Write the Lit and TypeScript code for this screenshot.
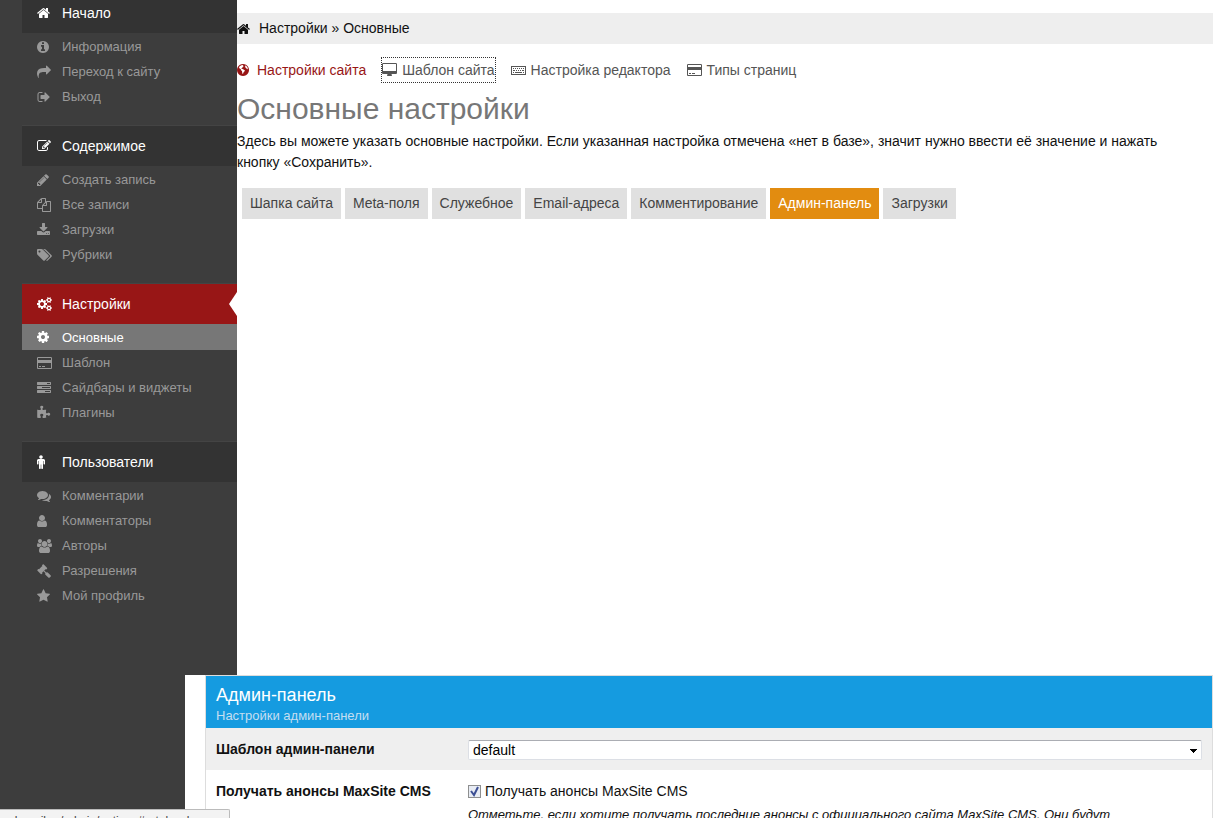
import { LitElement, html, css, svg } from "lit";
import { customElement, state } from "lit/decorators.js";

/* glyph: [left edge, advance width, path]; every glyph is 1792 units tall */
const GLYPHS: Record<string, [number, number, string]> = {
  home: [64, 1664, "M1472 992v480q0 26-19 45t-45 19h-384v-384h-256v384h-384q-26 0-45-19t-19-45v-480q0-1 .5-3t.5-3l575-474 575 474q1 2 1 6zm223-69l-62 74q-8 9-21 11h-3q-13 0-21-7l-692-577-692 577q-12 8-24 7-13-2-21-11l-62-74q-8-10-7-23.5t11-21.5l719-599q32-26 76-26t76 26l244 204v-195q0-14 9-23t23-9h192q14 0 23 9t9 23v408l219 182q10 8 11 21.5t-7 23.5z"],
  info: [128, 1536, "M1152 1376v-160q0-14-9-23t-23-9h-96v-512q0-14-9-23t-23-9h-320q-14 0-23 9t-9 23v160q0 14 9 23t23 9h96v320h-96q-14 0-23 9t-9 23v160q0 14 9 23t23 9h448q14 0 23-9t9-23zm-128-896v-160q0-14-9-23t-23-9h-192q-14 0-23 9t-9 23v160q0 14 9 23t23 9h192q14 0 23-9t9-23zm640 416q0 209-103 385.5t-279.5 279.5-385.5 103-385.5-103-279.5-279.5-103-385.5 103-385.5 279.5-279.5 385.5-103 385.5 103 279.5 279.5 103 385.5z"],
  share: [0, 1792, "M1792 640q0 26-19 45l-512 512q-19 19-45 19t-45-19-19-45v-256h-224q-98 0-175.5 6t-154 21.5-133 42.5-105.5 69.5-80 101-48.5 138.5-17.5 181q0 55 5 123 0 6 2.5 23.5t2.5 26.5q0 15-8.5 25t-23.5 10q-16 0-28-17-7-9-13-22t-13.5-30-10.5-24q-127-285-127-451 0-199 53-333 162-403 875-403h224v-256q0-26 19-45t45-19 45 19l512 512q19 19 19 45z"],
  exit: [0, 1664, "M704 1440q0 4 1 20t.5 26.5-3 23.5-10 19.5-20.5 6.5h-320q-119 0-203.5-84.5t-84.5-203.5v-704q0-119 84.5-203.5t203.5-84.5h320q13 0 22.5 9.5t9.5 22.5q0 4 1 20t.5 26.5-3 23.5-10 19.5-20.5 6.5h-320q-66 0-113 47t-47 113v704q0 66 47 113t113 47h312l11.5 1 11.5 3 8 5.5 7 9 2 13.5zm928-544q0 26-19 45l-544 544q-19 19-45 19t-45-19-19-45v-288h-448q-26 0-45-19t-19-45v-384q0-26 19-45t45-19h448v-288q0-26 19-45t45-19 45 19l544 544q19 19 19 45z"],
  edit: [0, 1792, "M888 1184l116-116-152-152-116 116v56h96v96h56zm440-720q-16-16-33 1l-350 350q-17 17-1 33t33-1l350-350q17-17 1-33zm80 594v190q0 119-84.5 203.5t-203.5 84.5h-832q-119 0-203.5-84.5t-84.5-203.5v-832q0-119 84.5-203.5t203.5-84.5h832q63 0 117 25 15 7 18 23 3 17-9 29l-49 49q-14 14-32 8-23-6-45-6h-832q-66 0-113 47t-47 113v832q0 66 47 113t113 47h832q66 0 113-47t47-113v-126q0-13 9-22l64-64q15-15 35-7t20 29zm-96-738l288 288-672 672h-288v-288zm444 132l-92 92-288-288 92-92q28-28 68-28t68 28l152 152q28 28 28 68t-28 68z"],
  pencil: [128, 1536, "M491 1536l91-91-235-235-91 91v107h128v128h107zm523-928q0-22-22-22-10 0-17 7l-542 542q-7 7-7 17 0 22 22 22 10 0 17-7l542-542q7-7 7-17zm-54-192l416 416-832 832h-416v-416zm683 96q0 53-37 90l-166 166-416-416 166-165q36-38 90-38 53 0 91 38l235 234q37 39 37 91z"],
  files: [0, 1792, "M1696 384q40 0 68 28t28 68v1216q0 40-28 68t-68 28h-960q-40 0-68-28t-28-68v-288h-544q-40 0-68-28t-28-68v-672q0-40 20-88t48-76l408-408q28-28 76-48t88-20h416q40 0 68 28t28 68v328q68-40 128-40h416zm-544 213l-299 299h299v-299zm-640-384l-299 299h299v-299zm196 647l316-316v-416h-384v416q0 40-28 68t-68 28h-416v640h512v-256q0-40 20-88t48-76zm956 804v-1152h-384v416q0 40-28 68t-68 28h-416v640h896z"],
  download: [64, 1664, "M1344 1344q0-26-19-45t-45-19-45 19-19 45 19 45 45 19 45-19 19-45zm256 0q0-26-19-45t-45-19-45 19-19 45 19 45 45 19 45-19 19-45zm128-224v320q0 40-28 68t-68 28h-1472q-40 0-68-28t-28-68v-320q0-40 28-68t68-28h465l135 136q58 56 136 56t136-56l136-136h464q40 0 68 28t28 68zm-325-569q17 41-14 70l-448 448q-18 19-45 19t-45-19l-448-448q-31-29-14-70 17-39 59-39h256v-448q0-26 19-45t45-19h256q26 0 45 19t19 45v448h256q42 0 59 39z"],
  tags: [0, 1920, "M448 448q0-53-37.5-90.5t-90.5-37.5-90.5 37.5-37.5 90.5 37.5 90.5 90.5 37.5 90.5-37.5 37.5-90.5zm1067 576q0 53-37 90l-491 492q-39 37-91 37-53 0-90-37l-715-716q-38-37-64.5-101t-26.5-117v-416q0-52 38-90t90-38h416q53 0 117 26.5t102 64.5l715 714q37 39 37 91zm384 0q0 53-37 90l-491 492q-39 37-91 37-36 0-59-14t-53-45l470-470q37-37 37-90 0-52-37-91l-715-714q-38-38-102-64.5t-117-26.5h224q53 0 117 26.5t102 64.5l715 714q37 39 37 91z"],
  cogs: [0, 1920, "M896 896q0-106-75-181t-181-75-181 75-75 181 75 181 181 75 181-75 75-181zm768 512q0-52-38-90t-90-38-90 38-38 90q0 53 37.5 90.5t90.5 37.5 90.5-37.5 37.5-90.5zm0-1024q0-52-38-90t-90-38-90 38-38 90q0 53 37.5 90.5t90.5 37.5 90.5-37.5 37.5-90.5zm-384 421v185q0 10-7 19.5t-16 10.5l-155 24q-11 35-32 76 34 48 90 115 7 11 7 20 0 12-7 19-23 30-82.5 89.5t-78.5 59.5q-11 0-21-7l-115-90q-37 19-77 31-11 108-23 155-7 24-30 24h-186q-11 0-20-7.5t-10-17.5l-23-153q-34-10-75-31l-118 89q-7 7-20 7-11 0-21-8-144-133-144-160 0-9 7-19 10-14 41-53t47-61q-23-44-35-82l-152-24q-10-1-17-9.5t-7-19.5v-185q0-10 7-19.5t16-10.5l155-24q11-35 32-76-34-48-90-115-7-11-7-20 0-12 7-20 22-30 82-89t79-59q11 0 21 7l115 90q34-18 77-32 11-108 23-154 7-24 30-24h186q11 0 20 7.5t10 17.5l23 153q34 10 75 31l118-89q8-7 20-7 11 0 21 8 144 133 144 160 0 8-7 19-12 16-42 54t-45 60q23 48 34 82l152 23q10 2 17 10.5t7 19.5zm640 533v140q0 16-149 31-12 27-30 52 51 113 51 138 0 4-4 7-122 71-124 71-8 0-46-47t-52-68q-20 2-30 2t-30-2q-14 21-52 68t-46 47q-2 0-124-71-4-3-4-7 0-25 51-138-18-25-30-52-149-15-149-31v-140q0-16 149-31 13-29 30-52-51-113-51-138 0-4 4-7 4-2 35-20t59-34 30-16q8 0 46 46.5t52 67.5q20-2 30-2t30 2q51-71 92-112l6-2q4 0 124 70 4 3 4 7 0 25-51 138 17 23 30 52 149 15 149 31zm0-1024v140q0 16-149 31-12 27-30 52 51 113 51 138 0 4-4 7-122 71-124 71-8 0-46-47t-52-68q-20 2-30 2t-30-2q-14 21-52 68t-46 47q-2 0-124-71-4-3-4-7 0-25 51-138-18-25-30-52-149-15-149-31v-140q0-16 149-31 13-29 30-52-51-113-51-138 0-4 4-7 4-2 35-20t59-34 30-16q8 0 46 46.5t52 67.5q20-2 30-2t30 2q51-71 92-112l6-2q4 0 124 70 4 3 4 7 0 25-51 138 17 23 30 52 149 15 149 31z"],
  cog: [128, 1536, "M1152 896q0-106-75-181t-181-75-181 75-75 181 75 181 181 75 181-75 75-181zm512-109v222q0 12-8 23t-20 13l-185 28q-19 54-39 91 35 50 107 138 10 12 10 25t-9 23q-27 37-99 108t-94 71q-12 0-26-9l-138-108q-44 23-91 38-16 136-29 186-7 28-36 28h-222q-14 0-24.5-8.5t-11.5-21.5l-28-184q-49-16-90-37l-141 107q-10 9-25 9-14 0-25-11-126-114-165-168-7-10-7-23 0-12 8-23 15-21 51-66.5t54-70.5q-27-50-41-99l-183-27q-13-2-21-12.5t-8-23.5v-222q0-12 8-23t19-13l186-28q14-46 39-92-40-57-107-138-10-12-10-24 0-10 9-23 26-36 98.5-107.5t94.5-71.5q13 0 26 10l138 107q44-23 91-38 16-136 29-186 7-28 36-28h222q14 0 24.5 8.5t11.5 21.5l28 184q49 16 90 37l142-107q9-9 24-9 13 0 25 10 129 119 165 170 7 8 7 22 0 12-8 23-15 21-51 66.5t-54 70.5q26 50 41 98l183 28q13 2 21 12.5t8 23.5z"],
  card: [0, 1920, "M1760 128q66 0 113 47t47 113v1216q0 66-47 113t-113 47h-1600q-66 0-113-47t-47-113v-1216q0-66 47-113t113-47h1600zm-1600 128q-13 0-22.5 9.5t-9.5 22.5v224h1664v-224q0-13-9.5-22.5t-22.5-9.5h-1600zm1600 1280q13 0 22.5-9.5t9.5-22.5v-608h-1664v608q0 13 9.5 22.5t22.5 9.5h1600zm-1504-128v-128h256v128h-256zm384 0v-128h384v128h-384z"],
  tasks: [0, 1792, "M1024 1408h640v-128h-640v128zm-384-512h1024v-128h-1024v128zm640-512h384v-128h-384v128zm512 832v256q0 26-19 45t-45 19h-1664q-26 0-45-19t-19-45v-256q0-26 19-45t45-19h1664q26 0 45 19t19 45zm0-512v256q0 26-19 45t-45 19h-1664q-26 0-45-19t-19-45v-256q0-26 19-45t45-19h1664q26 0 45 19t19 45zm0-512v256q0 26-19 45t-45 19h-1664q-26 0-45-19t-19-45v-256q0-26 19-45t45-19h1664q26 0 45 19t19 45z"],
  puzzle: [64, 1728, "M1755 1061q0 81-44.5 135t-123.5 54q-41 0-77.5-17.5t-59-38-56.5-38-71-17.5q-110 0-110 124 0 39 16 115t15 115v5q-22 0-33 1-34 3-97.5 11.5t-115.5 13.5-98 5q-61 0-103-26.5t-42-83.5q0-37 17.5-71t38-56.5 38-59 17.5-77.5q0-79-54-123.5t-135-44.5q-84 0-143 45.5t-59 127.5q0 43 15 83t33.5 64.5 33.5 53 15 50.5q0 45-46 89-37 35-117 35-95 0-245-24-9-2-27.5-4t-27.5-4l-13-2q-1 0-3-1-2 0-2-1v-1024q2 1 17.5 3.5t34 5 21.5 3.5q150 24 245 24 80 0 117-35 46-44 46-89 0-22-15-50.5t-33.5-53-33.5-64.5-15-83q0-82 59-127.5t144-45.5q80 0 134 44.5t54 123.5q0 41-17.5 77.5t-38 59-38 56.5-17.5 71q0 57 42 83.5t103 26.5q64 0 180-15t163-17v2q-1 2-3.5 17.5t-5 34-3.5 21.5q-24 150-24 245 0 80 35 117 44 46 89 46 22 0 50.5-15t53-33.5 64.5-33.5 83-15q82 0 127.5 59t45.5 143z"],
  male: [384, 1024, "M1408 704v416q0 40-28 68t-68 28-68-28-28-68v-352h-64v912q0 46-33 79t-79 33-79-33-33-79v-464h-64v464q0 46-33 79t-79 33-79-33-33-79v-912h-64v352q0 40-28 68t-68 28-68-28-28-68v-416q0-80 56-136t136-56h640q80 0 136 56t56 136zm-288-448q0 93-65.5 158.5t-158.5 65.5-158.5-65.5-65.5-158.5 65.5-158.5 158.5-65.5 158.5 65.5 65.5 158.5z"],
  comments: [0, 1792, "M1408 768q0 139-94 257t-256.5 186.5-353.5 68.5q-86 0-176-16-124 88-278 128-36 9-86 16h-3q-11 0-20.5-8t-11.5-21q-1-3-1-6.5t.5-6.5 2-6l2.5-5 3.5-5.5 4-5 4.5-5 4-4.5q5-6 23-25t26-29.5 22.5-29 25-38.5 20.5-44q-124-72-195-177t-71-224q0-139 94-257t256.5-186.5 353.5-68.5 353.5 68.5 256.5 186.5 94 257zm384 256q0 120-71 224.5t-195 176.5q10 24 20.5 44t25 38.5 22.5 29 26 29.5 23 25q1 1 4 4.5t4.5 5 4 5 3.5 5.5l2.5 5 2 6 .5 6.5-1 6.5q-3 14-13 22t-22 7q-50-7-86-16-154-40-278-128-90 16-176 16-271 0-472-132 58 4 88 4 161 0 309-45t264-129q125-92 192-212t67-254q0-77-23-152 129 71 204 178t75 230z"],
  user: [256, 1280, "M1536 1399q0 109-62.5 187t-150.5 78h-854q-88 0-150.5-78t-62.5-187q0-85 8.5-160.5t31.5-152 58.5-131 94-89 134.5-34.5q131 128 313 128t313-128q76 0 134.5 34.5t94 89 58.5 131 31.5 152 8.5 160.5zm-256-887q0 159-112.5 271.5t-271.5 112.5-271.5-112.5-112.5-271.5 112.5-271.5 271.5-112.5 271.5 112.5 112.5 271.5z"],
  group: [0, 1920, "M593 896q-162 5-265 128h-134q-82 0-138-40.5t-56-118.5q0-353 124-353 6 0 43.5 21t97.5 42.5 119 21.5q67 0 133-23-5 37-5 66 0 139 81 256zm1071 637q0 120-73 189.5t-194 69.5h-874q-121 0-194-69.5t-73-189.5q0-53 3.5-103.5t14-109 26.5-108.5 43-97.5 62-81 85.5-53.5 111.5-20q10 0 43 21.5t73 48 107 48 135 21.5 135-21.5 107-48 73-48 43-21.5q61 0 111.5 20t85.5 53.5 62 81 43 97.5 26.5 108.5 14 109 3.5 103.5zm-1024-1277q0 106-75 181t-181 75-181-75-75-181 75-181 181-75 181 75 75 181zm704 384q0 159-112.5 271.5t-271.5 112.5-271.5-112.5-112.5-271.5 112.5-271.5 271.5-112.5 271.5 112.5 112.5 271.5zm576 225q0 78-56 118.5t-138 40.5h-134q-103-123-265-128 81-117 81-256 0-29-5-66 66 23 133 23 59 0 119-21.5t97.5-42.5 43.5-21q124 0 124 353zm-128-609q0 106-75 181t-181 75-181-75-75-181 75-181 181-75 181 75 75 181z"],
  gavel: [0, 1792, "M1771 1536q0 53-37 90l-107 108q-39 37-91 37-53 0-90-37l-363-364q-38-36-38-90 0-53 43-96l-256-256-126 126q-14 14-34 14t-34-14q2 2 12.5 12t12.5 13 10 11.5 10 13.5 6 13.5 5.5 16.5 1.5 18q0 38-28 68-3 3-16.5 18t-19 20.5-18.5 16.5-22 15.5-22 9-26 4.5q-40 0-68-28l-408-408q-28-28-28-68 0-13 4.5-26t9-22 15.5-22 16.5-18.5 20.5-19 18-16.5q30-28 68-28 10 0 18 1.5t16.5 5.5 13.5 6 13.5 10 11.5 10 13 12.5 12 12.5q-14-14-14-34t14-34l348-348q14-14 34-14t34 14q-2-2-12.5-12t-12.5-13-10-11.5-10-13.5-6-13.5-5.5-16.5-1.5-18q0-38 28-68 3-3 16.5-18t19-20.5 18.5-16.5 22-15.5 22-9 26-4.5q40 0 68 28l408 408q28 28 28 68 0 13-4.5 26t-9 22-15.5 22-16.5 18.5-20.5 19-18 16.5q-30 28-68 28-10 0-18-1.5t-16.5-5.5-13.5-6-13.5-10-11.5-10-13-12.5-12-12.5q14 14 14 34t-14 34l-126 126 256 256q43-43 96-43 52 0 91 37l363 363q37 39 37 91z"],
  star: [64, 1664, "M1728 647q0 22-26 48l-363 354 86 500q1 7 1 20 0 21-10.5 35.5t-30.5 14.5q-19 0-40-12l-449-236-449 236q-22 12-40 12-21 0-31.5-14.5t-10.5-35.5q0-6 2-20l86-500-364-354q-25-27-25-48 0-37 56-46l502-73 225-455q19-41 49-41t49 41l225 455 502 73q56 9 56 46z"],
  desktop: [0, 1920, "M1792 992v-832q0-13-9.5-22.5t-22.5-9.5h-1600q-13 0-22.5 9.5t-9.5 22.5v832q0 13 9.5 22.5t22.5 9.5h1600q13 0 22.5-9.5t9.5-22.5zm128-832v1088q0 66-47 113t-113 47h-544q0 37 16 77.5t32 71 16 43.5q0 26-19 45t-45 19h-512q-26 0-45-19t-19-45q0-14 16-44t32-70 16-78h-544q-66 0-113-47t-47-113v-1088q0-66 47-113t113-47h1600q66 0 113 47t47 113z"],
  /* disc with the Americas and the edge of Africa left open */
  globe: [0, 1536, "M768 128a768 768 0 1 0 1 0zM560 300q120-60 260-50l-60 110 90 60-120 90-40 110-130 40 30 90 150 20 140 100 130 60-60 170-110 80-50 150-90 90-40-190-20-200-130-110-20-130-150-80-90-110q20-200 310-300zM1050 330l150 60 150 200 40 220-130-30-90-130-110-60 20-110-80-70z"],
  keyboard: [0, 1920, "M0 384h1920v1152h-1920zM128 512v896h1664v-896zM256 640h128v128h-128zM512 640h128v128h-128zM768 640h128v128h-128zM1024 640h128v128h-128zM1280 640h128v128h-128zM1536 640h128v128h-128zM256 896h256v128h-256zM640 896h128v128h-128zM896 896h128v128h-128zM1152 896h128v128h-128zM1408 896h256v128h-256zM256 1152h128v128h-128zM512 1152h896v128h-896zM1536 1152h128v128h-128z"],
};

const icon = (name: string) => {
  const [x, w, d] = GLYPHS[name];
  return html`<svg class="icon" viewBox="${x} 0 ${w} 1792" width=${w / 128} height="14" aria-hidden="true">
    ${svg`<path fill-rule=${name === "globe" || name === "keyboard" ? "evenodd" : "nonzero"} d=${d}></path>`}
  </svg>`;
};

interface Item { icon: string; text: string }
interface Section extends Item { items: Item[] }

const MENU: Section[] = [
  { icon: "home", text: "Начало", items: [
    { icon: "info", text: "Информация" },
    { icon: "share", text: "Переход к сайту" },
    { icon: "exit", text: "Выход" },
  ] },
  { icon: "edit", text: "Содержимое", items: [
    { icon: "pencil", text: "Создать запись" },
    { icon: "files", text: "Все записи" },
    { icon: "download", text: "Загрузки" },
    { icon: "tags", text: "Рубрики" },
  ] },
  { icon: "cogs", text: "Настройки", items: [
    { icon: "cog", text: "Основные" },
    { icon: "card", text: "Шаблон" },
    { icon: "tasks", text: "Сайдбары и виджеты" },
    { icon: "puzzle", text: "Плагины" },
  ] },
  { icon: "male", text: "Пользователи", items: [
    { icon: "comments", text: "Комментарии" },
    { icon: "user", text: "Комментаторы" },
    { icon: "group", text: "Авторы" },
    { icon: "gavel", text: "Разрешения" },
    { icon: "star", text: "Мой профиль" },
  ] },
];

const PAGES: Item[] = [
  { icon: "globe", text: "Настройки сайта" },
  { icon: "desktop", text: "Шаблон сайта" },
  { icon: "keyboard", text: "Настройка редактора" },
  { icon: "card", text: "Типы страниц" },
];

const TABS = ["Шапка сайта", "Meta-поля", "Служебное", "Email-адреса", "Комментирование", "Админ-панель", "Загрузки"];

@customElement("app-root")
export class AppRoot extends LitElement {
  @state() private tab = "Админ-панель";

  static styles = css`
    :host {
      display: block;
      height: 100vh;
      overflow: hidden;
      position: relative;
      background: #fff;
      color: #111;
      font: 14px/21px "Liberation Sans", Arial, sans-serif;
    }
    * { box-sizing: border-box; }
    a { color: inherit; text-decoration: none; }
    ul { list-style: none; margin: 0; padding: 0; }
    .icon { display: block; flex: none; fill: currentColor; overflow: visible; }
    .layout { display: grid; grid-template-columns: 237px minmax(0, 1fr); height: 100%; }

    .sidebar { background: #3d3d3d; padding-left: 22px; overflow: hidden; }
    .menu { margin-top: -8px; }
    .head {
      display: flex;
      align-items: center;
      position: relative;
      height: 41px;
      padding-left: 15px;
      background: #333;
      border-top: 1px solid #444;
      color: #fff;
    }
    .slot { width: 25px; flex: none; }
    .head.active { background: #981616; }
    .head.active::after {
      content: "";
      position: absolute;
      right: 0;
      top: 8px;
      width: 8px;
      height: 24px;
      background: #fff;
      clip-path: polygon(100% 0, 100% 100%, 0 50%);
    }
    .items { padding: 1px 0 16px; }
    .item {
      display: flex;
      align-items: center;
      height: 25px;
      padding-left: 15px;
      font-size: 13px;
      color: #999;
    }
    .item.active { height: 26px; margin-top: -1px; background: #777; color: #fff; }

    .main { display: flex; flex-direction: column; padding: 13px 9px 0 0; }
    .crumbs { display: flex; align-items: center; flex: none; height: 31px; background: #eee; }
    .crumbs .slot { width: 22px; }
    .pages { display: flex; gap: 16px; margin-top: 14px; }
    .page { display: flex; align-items: center; height: 24px; color: #555; }
    .page .slot { width: 20px; }
    .page.current { color: #981616; }
    .page.focused { outline: 1px dotted #333; }
    h1 { margin: 9px 0 4px; font-size: 30px; line-height: 36px; font-weight: normal; color: #777; }
    p { margin: 0; padding-right: 20px; }
    .tabs { display: flex; gap: 4px; margin: 15px 0 0 5px; }
    .tab {
      height: 31px;
      padding: 0 8px;
      border: 0;
      background: #e0e0e0;
      color: #444;
      font: inherit;
      white-space: nowrap;
    }
    .tab.active { background: #e28c10; color: #fff; }

    .sheet {
      position: relative;
      flex: none;
      margin: 456px 0 0 -52px;
      padding-left: 20px;
      background: #fff;
    }
    .panel { border: 1px solid #ddd; }
    .title { height: 52px; padding: 8px 10px 0; background: #159be0; color: #fff; }
    h2 { margin: 0; font-size: 18px; line-height: 22px; font-weight: normal; }
    .sub { font-size: 13px; line-height: 19px; color: #c4def0; }
    .row { display: grid; grid-template-columns: 252px minmax(0, 1fr); padding: 11px 10px 10px; }
    .row.shade { height: 42px; background: #efefef; }
    .name { font-weight: bold; }
    .pick { position: relative; padding-top: 1px; }
    .pick select {
      display: block;
      appearance: none;
      width: 100%;
      height: 20px;
      margin: 0;
      padding: 0 20px 0 4px;
      border: 1px solid #dcdfe5;
      border-top-color: #abadb3;
      border-radius: 2px;
      background: #fff;
      color: #000;
      font: inherit;
      line-height: 18px;
    }
    .caret { position: absolute; right: 5px; top: 10px; pointer-events: none; }
    .check { display: flex; align-items: center; gap: 4px; }
    .check input {
      appearance: none;
      width: 13px;
      height: 13px;
      margin: 0;
      border: 1px solid #8e8f8f;
      background: #f4f4f4;
    }
    .check input:checked {
      background: #e8ecf4 url("data:image/svg+xml,%3Csvg xmlns='http://www.w3.org/2000/svg' viewBox='0 0 11 11'%3E%3Cpath d='M2 5l3 4 4-8' fill='none' stroke='%233c4f94' stroke-width='2'/%3E%3C/svg%3E");
    }
    .hint { margin-top: 2px; font-size: 13px; font-style: italic; }
    .status {
      position: absolute;
      left: 0;
      bottom: 0;
      width: 230px;
      height: 9px;
      overflow: hidden;
      padding: 4px 4px 0;
      border: solid #bbb;
      border-width: 1px 1px 0 0;
      border-radius: 0 2px 0 0;
      background: #f3f3f3;
      color: #444;
      font-size: 12px;
      line-height: 15px;
      white-space: nowrap;
    }
  `;

  private section(s: Section) {
    return html`<li>
      <a class="head ${s.text === "Настройки" ? "active" : ""}" href="#"><span class="slot">${icon(s.icon)}</span>${s.text}</a>
      <ul class="items">
        ${s.items.map((i) => html`<li><a class="item ${i.text === "Основные" ? "active" : ""}" href="#"><span class="slot">${icon(i.icon)}</span>${i.text}</a></li>`)}
      </ul>
    </li>`;
  }

  render() {
    return html`
      <div class="layout">
        <nav class="sidebar"><ul class="menu">${MENU.map((s) => this.section(s))}</ul></nav>
        <main class="main">
          <div class="crumbs"><span class="slot">${icon("home")}</span><span>Настройки » Основные</span></div>
          <nav class="pages">
            ${PAGES.map((p, n) => html`<a class="page ${n === 0 ? "current" : n === 1 ? "focused" : ""}" href="#"><span class="slot">${icon(p.icon)}</span>${p.text}</a>`)}
          </nav>
          <h1>Основные настройки</h1>
          <p>Здесь вы можете указать основные настройки. Если указанная настройка отмечена «нет в базе», значит нужно ввести её значение и нажать кнопку «Сохранить».</p>
          <div class="tabs">
            ${TABS.map((t) => html`<button type="button" class="tab ${t === this.tab ? "active" : ""}" @click=${() => (this.tab = t)}>${t}</button>`)}
          </div>
          <form class="sheet">
            <div class="panel">
              <div class="title"><h2>Админ-панель</h2><div class="sub">Настройки админ-панели</div></div>
              <div class="row shade">
                <label class="name" for="template">Шаблон админ-панели</label>
                <div class="pick">
                  <select id="template"><option>default</option></select>
                  <svg class="caret" width="7" height="4" viewBox="0 0 7 4" aria-hidden="true"><path d="M0 0h7v1h-1v1h-1v1h-1v1h-1v-1h-1v-1h-1v-1h-1z"></path></svg>
                </div>
              </div>
              <div class="row">
                <div class="name">Получать анонсы MaxSite CMS</div>
                <div>
                  <label class="check"><input type="checkbox" checked />Получать анонсы MaxSite CMS</label>
                  <div class="hint">Отметьте, если хотите получать последние анонсы с официального сайта MaxSite CMS. Они будут</div>
                </div>
              </div>
            </div>
          </form>
        </main>
      </div>
      <div class="status">udemail.ru/admin/options#a-tab-adm</div>
    `;
  }
}
